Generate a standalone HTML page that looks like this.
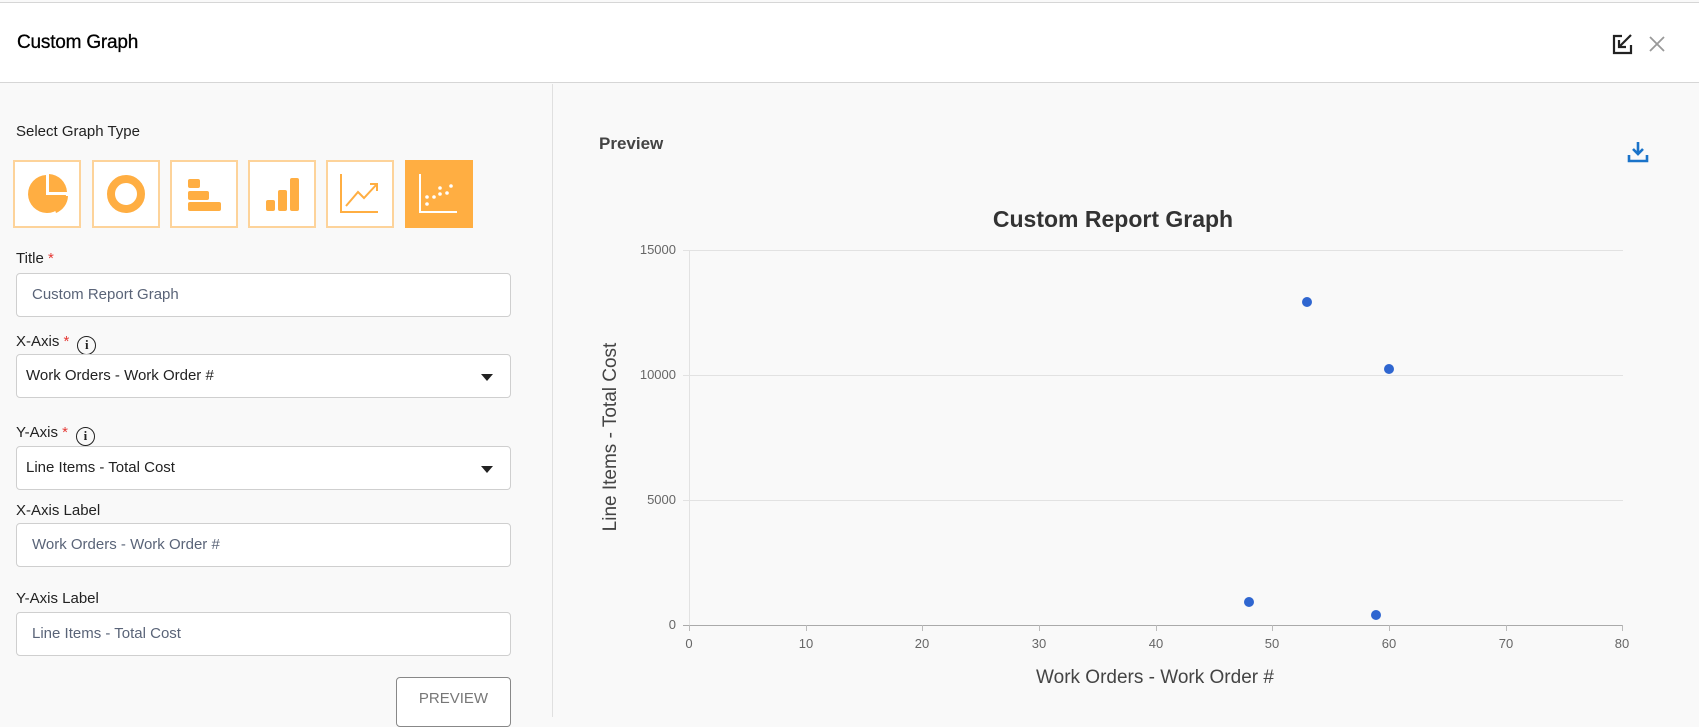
<!DOCTYPE html>
<html><head><meta charset="utf-8"><style>
*{margin:0;padding:0;box-sizing:border-box}
body{width:1699px;height:717px;overflow:hidden;background:#f9f9f9;font-family:"Liberation Sans",sans-serif;position:relative;color:#222}
.hdr{position:absolute;left:0;top:2px;width:1699px;height:81px;background:#fff;border-top:1px solid #d6d6d6;border-bottom:1px solid #d6d6d6}
.hdr h1{position:absolute;left:17px;top:29px;font-size:19px;font-weight:normal;color:#000;letter-spacing:-0.2px;-webkit-text-stroke:0.3px #000}
.abs{position:absolute}
.lbl{position:absolute;left:16px;font-size:15px;color:#222}
.req{color:#e53935}
.inp{position:absolute;left:16px;width:495px;height:44px;background:#fff;border:1px solid #cfcfcf;border-radius:4px;font-size:15px;line-height:42px;padding-left:15px;color:#5a6478}
.sel{color:#222;padding-left:9px}
.sel:after{content:"";position:absolute;right:17px;top:19px;border-left:6px solid transparent;border-right:6px solid transparent;border-top:7px solid #222}
.box{position:absolute;top:160px;width:68px;height:68px;border:2px solid #fdd39a;background:#fff}
.info{display:inline-block;width:19px;height:19px;border:1.6px solid #222;border-radius:50%;font-size:13px;line-height:16px;text-align:center;font-weight:bold;font-family:"Liberation Serif",serif;vertical-align:-3px;margin-left:8px}
</style></head><body>
<div class="hdr"><h1>Custom Graph</h1>
<svg class="abs" style="left:1611px;top:30px" width="24" height="22" viewBox="0 0 24 22"><path d="M11 3H3v17h17v-8" fill="none" stroke="#222" stroke-width="2.2"/><path d="M20 2L9 13M8 7v7h7" fill="none" stroke="#222" stroke-width="2.2"/></svg>
<svg class="abs" style="left:1649px;top:33px" width="16" height="16" viewBox="0 0 16 16"><path d="M1 1L15 15M15 1L1 15" stroke="#999" stroke-width="1.8"/></svg>
</div>
<div class="abs" style="left:552px;top:84px;width:1px;height:633px;background:#e0e0e0"></div>
<div class="lbl" style="top:123px">Select Graph Type</div>
<div class="box" style="left:13px"><svg width="64" height="64" viewBox="0 0 64 64"><path d="M31 13A19 19 0 1 0 51 33H31Z" fill="#ffae42"/><path d="M34 12A19 19 0 0 1 52 30H34Z" fill="#ffae42"/><path d="M34 33H52A19 19 0 0 1 40 50Z" fill="#ffae42" transform="translate(1,1)"/></svg></div>
<div class="box" style="left:92px"><svg width="64" height="64" viewBox="0 0 64 64"><circle cx="32" cy="32" r="15" fill="none" stroke="#ffae42" stroke-width="8"/></svg></div>
<div class="box" style="left:170px"><svg width="64" height="64" viewBox="0 0 64 64"><rect x="16" y="17" width="12" height="9" rx="2" fill="#ffae42"/><rect x="16" y="29" width="21" height="9" rx="2" fill="#ffae42"/><rect x="16" y="40" width="33" height="9" rx="2" fill="#ffae42"/></svg></div>
<div class="box" style="left:248px"><svg width="64" height="64" viewBox="0 0 64 64"><rect x="16" y="38" width="9" height="11" rx="2" fill="#ffae42"/><rect x="28" y="28" width="9" height="21" rx="2" fill="#ffae42"/><rect x="40" y="16" width="9" height="33" rx="2" fill="#ffae42"/></svg></div>
<div class="box" style="left:326px"><svg width="64" height="64" viewBox="0 0 64 64"><path d="M13 12V50H50" fill="none" stroke="#ffae42" stroke-width="2"/><path d="M18 44L30 30L36 36L49 22M42 22H49V29" fill="none" stroke="#ffae42" stroke-width="2"/></svg></div>
<div class="box" style="left:405px;background:#ffae42;border-color:#ffae42"><svg width="64" height="64" viewBox="0 0 64 64"><path d="M13 12V50H50" fill="none" stroke="#fff" stroke-width="2"/><g fill="#fff"><circle cx="20" cy="42" r="1.8"/><circle cx="20" cy="35" r="1.8"/><circle cx="27" cy="35" r="1.8"/><circle cx="33" cy="32" r="1.8"/><circle cx="33" cy="26" r="1.8"/><circle cx="40" cy="31" r="1.8"/><circle cx="44" cy="24" r="1.8"/></g></svg></div>
<div class="lbl" style="top:250px">Title <span class="req">*</span></div>
<div class="inp" style="top:273px">Custom Report Graph</div>
<div class="lbl" style="top:333px">X-Axis <span class="req">*</span><span class="info">i</span></div>
<div class="inp sel" style="top:354px">Work Orders - Work Order #</div>
<div class="lbl" style="top:424px">Y-Axis <span class="req">*</span><span class="info">i</span></div>
<div class="inp sel" style="top:446px">Line Items - Total Cost</div>
<div class="lbl" style="top:502px">X-Axis Label</div>
<div class="inp" style="top:523px">Work Orders - Work Order #</div>
<div class="lbl" style="top:590px">Y-Axis Label</div>
<div class="inp" style="top:612px">Line Items - Total Cost</div>
<div class="abs" style="left:396px;top:677px;width:115px;height:50px;border:1px solid #888;border-radius:4px;background:#fff;color:#777;font-size:15px;text-align:center;line-height:42px">PREVIEW</div>
<div class="abs" style="left:599px;top:134px;font-size:17px;font-weight:bold;color:#444">Preview</div>
<svg class="abs" style="left:1627px;top:141px" width="22" height="22" viewBox="0 0 22 22"><path d="M11 1V13M6 8L11 13L16 8" fill="none" stroke="#1a73c9" stroke-width="2.6"/><path d="M2 14V20H20V14" fill="none" stroke="#1a73c9" stroke-width="2.6"/></svg>
<svg class="abs" style="left:0;top:0" width="1699" height="717">
<g font-family="Liberation Sans, sans-serif">
<text x="1113" y="227" font-size="23" font-weight="bold" fill="#333" text-anchor="middle">Custom Report Graph</text>
<g stroke="#e2e2e2" stroke-width="1"><line x1="683" y1="250.5" x2="1623" y2="250.5"/><line x1="683" y1="375.5" x2="1623" y2="375.5"/><line x1="683" y1="500.5" x2="1623" y2="500.5"/><line x1="689.5" y1="250" x2="689.5" y2="631"/></g>
<line x1="683" y1="625.5" x2="1623" y2="625.5" stroke="#aaa"/>
<g stroke="#bbb"><line x1="689.5" y1="625" x2="689.5" y2="631"/><line x1="806.5" y1="625" x2="806.5" y2="631"/><line x1="922.5" y1="625" x2="922.5" y2="631"/><line x1="1039.5" y1="625" x2="1039.5" y2="631"/><line x1="1156.5" y1="625" x2="1156.5" y2="631"/><line x1="1272.5" y1="625" x2="1272.5" y2="631"/><line x1="1389.5" y1="625" x2="1389.5" y2="631"/><line x1="1506.5" y1="625" x2="1506.5" y2="631"/><line x1="1622.5" y1="625" x2="1622.5" y2="631"/></g>
<g font-size="13" fill="#666" text-anchor="end"><text x="676" y="254">15000</text><text x="676" y="379">10000</text><text x="676" y="504">5000</text><text x="676" y="629">0</text></g>
<g font-size="13" fill="#666" text-anchor="middle"><text x="689" y="648">0</text><text x="806" y="648">10</text><text x="922" y="648">20</text><text x="1039" y="648">30</text><text x="1156" y="648">40</text><text x="1272" y="648">50</text><text x="1389" y="648">60</text><text x="1506" y="648">70</text><text x="1622" y="648">80</text></g>
<text x="1155" y="683" font-size="19" fill="#444" text-anchor="middle">Work Orders - Work Order #</text>
<text transform="translate(616,437) rotate(-90)" font-size="19" fill="#444" text-anchor="middle">Line Items - Total Cost</text>
<g fill="#2f66d0"><circle cx="1307" cy="302" r="5"/><circle cx="1389" cy="369" r="5"/><circle cx="1249" cy="602" r="5"/><circle cx="1376" cy="615" r="5"/></g>
</g></svg>
</body></html>
